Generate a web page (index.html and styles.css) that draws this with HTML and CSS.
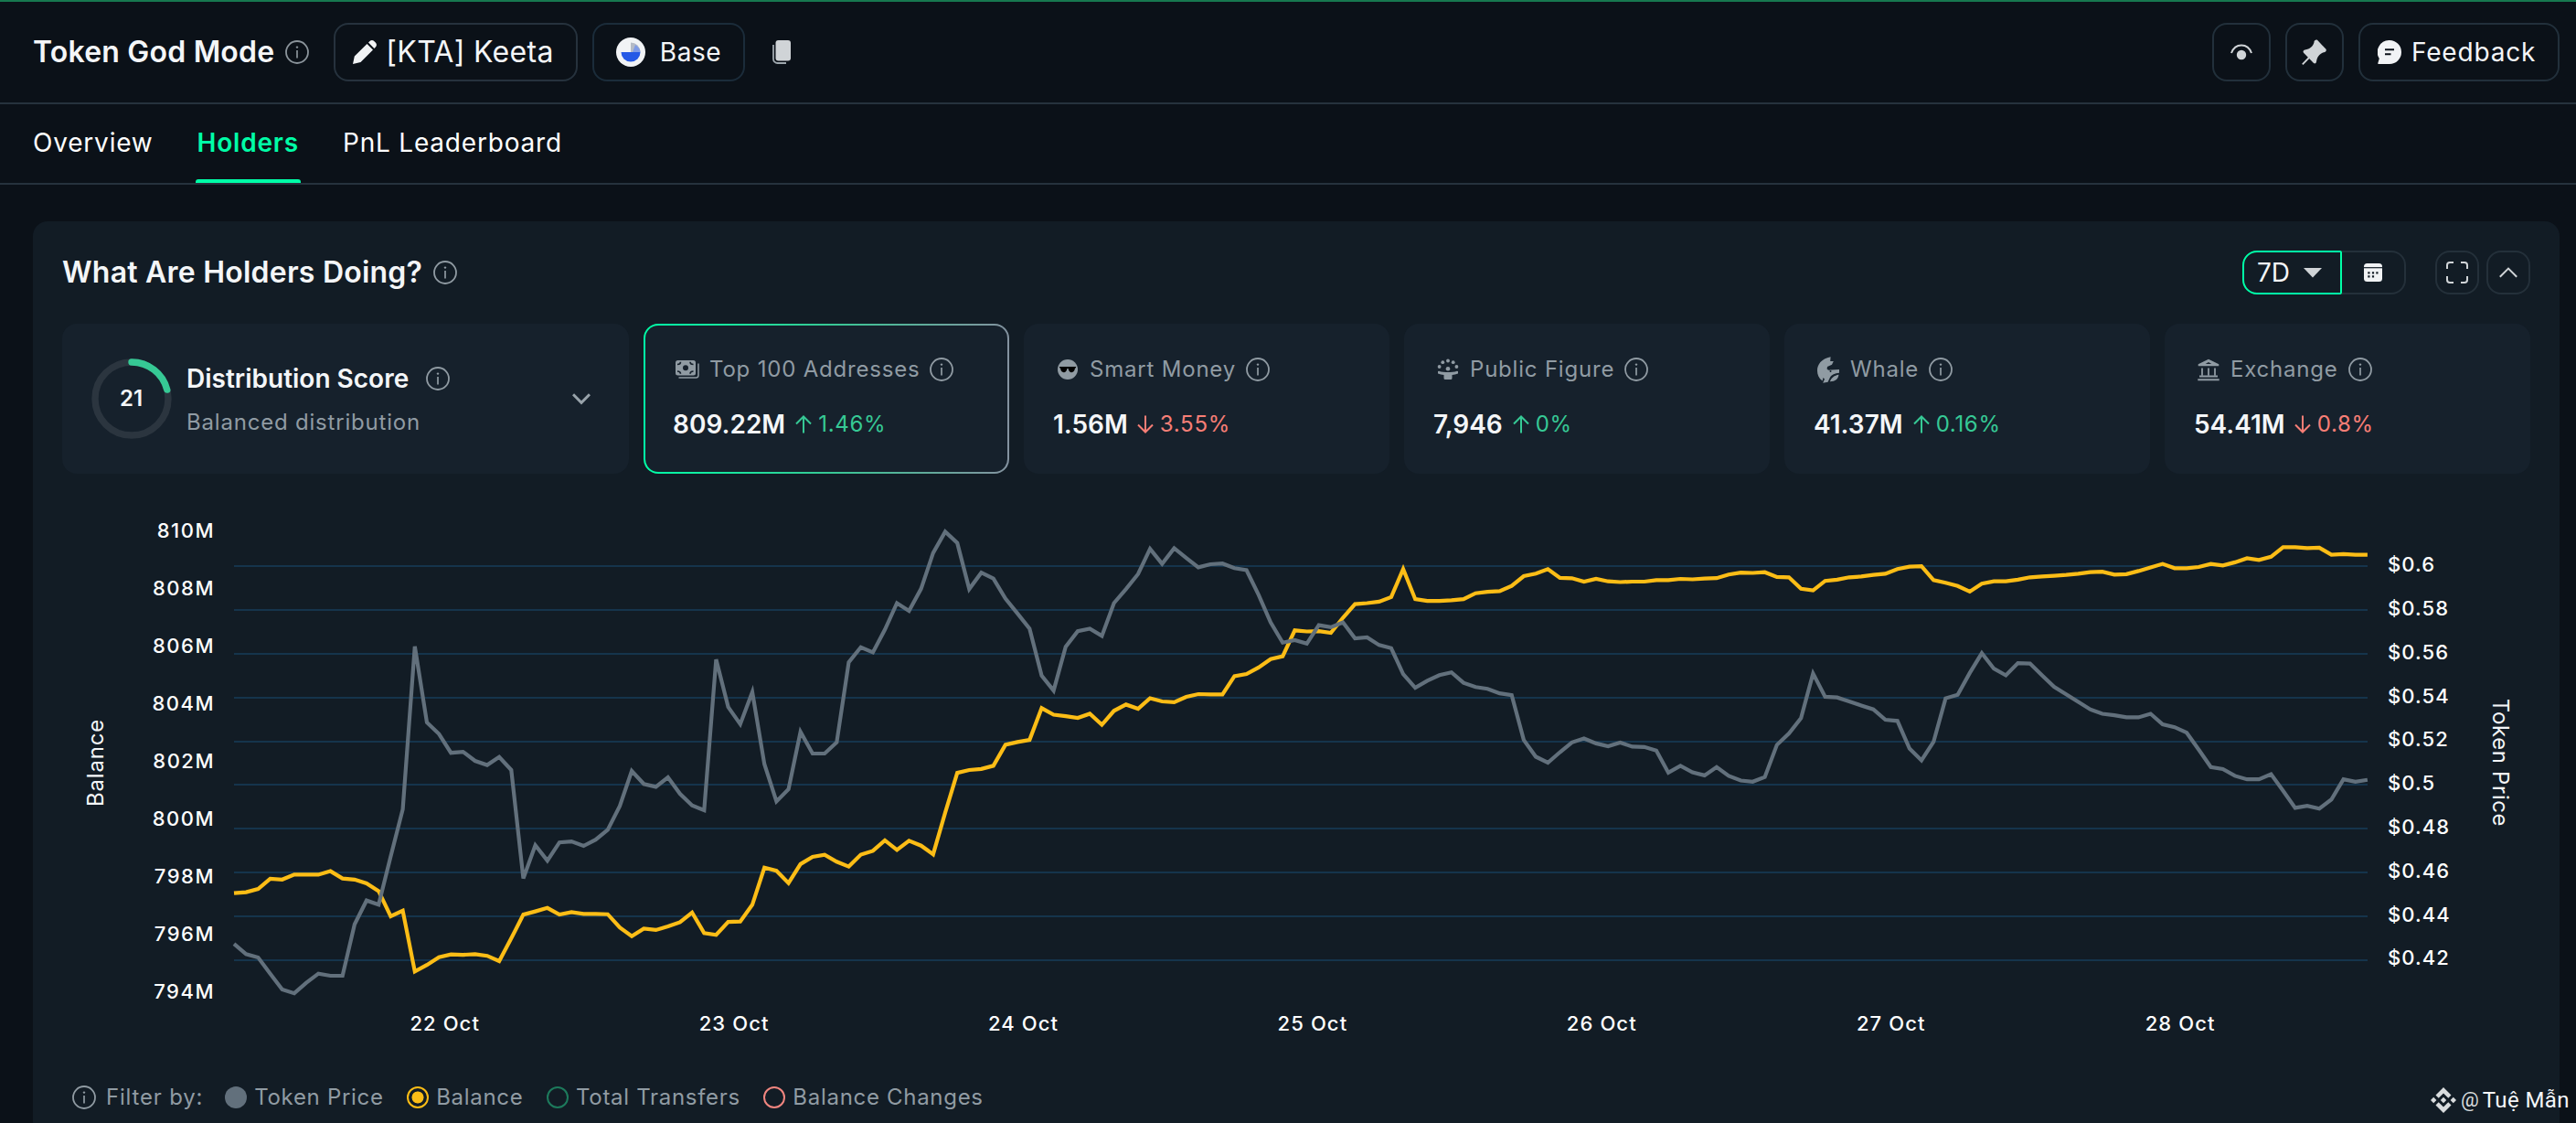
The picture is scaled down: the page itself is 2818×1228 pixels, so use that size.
FILE: index.html
```html
<!DOCTYPE html>
<html lang="en">
<head>
<meta charset="utf-8">
<title>Token God Mode</title>
<link rel="stylesheet" href="styles.css">
</head>
<body>
<svg class="defs" width="0" height="0" aria-hidden="true">
  <symbol id="info" viewBox="0 0 26 26"><circle cx="13" cy="13" r="12" fill="none" stroke="currentColor" stroke-width="1.8"/><circle cx="13" cy="7.600" r="1.200" fill="currentColor"/><path d="M13 11v8.500" stroke="currentColor" stroke-width="1.700"/></symbol>
  <symbol id="up" viewBox="0 0 18 20"><path d="M9 19.500V1.500M1 9.500l8-8 8 8" fill="none" stroke="currentColor" stroke-width="2"/></symbol>
  <symbol id="down" viewBox="0 0 18 20"><path d="M9 .5v18M1 10.500l8 8 8-8" fill="none" stroke="currentColor" stroke-width="2"/></symbol>
</svg>
<header class="topbar">
  <h1 class="page-title">Token God Mode</h1>
  <svg class="info title-info"><use href="#info"/></svg>
  <button class="pill token"><svg class="pencil" viewBox="0 0 26 26"><path d="M0 26l1.800-8.500L15.500 4l6.500 6.500L8.500 24z M17 2.600L18.500 1.100c1.500-1.500 3.500-1.300 5 .1l1.300 1.300c1.500 1.500 1.500 3.500.1 4.900L23.400 9z" fill="#f1f3f5"/></svg><span class="t">[KTA] Keeta</span></button>
  <button class="pill chain"><svg class="base" viewBox="0 0 32 32"><circle cx="16" cy="16" r="16" fill="#f1f3f5"/><path d="M16 5.500A10.500 10.500 0 0 1 26.500 16H16z" fill="#b5bbc6"/><path d="M21 8c3.500 2 5.500 5 5.500 8H18z" fill="#7f9be6"/><path d="M5.500 16h21a10.500 10.500 0 0 1-21 0z" fill="#2559e6"/></svg><span class="t">Base</span></button>
  <svg class="copy" viewBox="0 0 20 26"><rect x="3.500" width="16.500" height="22.500" rx="3" fill="#d0d4d7"/><path d="M1 5v15.500A4.500 4.500 0 0 0 5.500 25H15" fill="none" stroke="#9fa8ae" stroke-width="1.800"/></svg>
  <div class="actions">
    <button class="pill square"><svg width="24" height="18" viewBox="0 0 24 18"><path d="M1 10C3 4.500 7 1.500 12 1.500S21 4.500 23 10" fill="none" stroke="#d0d4d7" stroke-width="2"/><circle cx="12" cy="12" r="5.200" fill="#d0d4d7"/></svg></button>
    <button class="pill square"><svg width="28" height="28" viewBox="0 0 28 28"><path d="M17 .8c-1.800-.9-3.800 1-3.500 2.500C12 8 9 10.500 3.500 11.500c-1.800.6-2.500 2-1.500 3.300L13 26c1.400 1 2.700.3 3-1.500.7-5 3-8.300 7.800-10.200 2 .2 3.700-1.800 2.700-3.500z" fill="#d0d4d7"/><path d="M8 20L.8 27.300" stroke="#d0d4d7" stroke-width="1.800"/></svg></button>
    <button class="pill feedback"><svg width="26" height="26" viewBox="0 0 26 26"><path d="M13 0a13 13 0 1 1 0 26H1c-.7 0-1-.6-.6-1.200L1.800 20A13 13 0 0 1 13 0z" fill="#f1f3f5"/><path d="M8 10.300h10M8 15.300h6.500" stroke="#0b1118" stroke-width="2"/></svg><span class="t">Feedback</span></button>
  </div>
</header>
<nav class="tabs">
  <a class="tab"><span class="t">Overview</span></a>
  <a class="tab active"><span class="t">Holders</span></a>
  <a class="tab"><span class="t">PnL Leaderboard</span></a>
</nav>
<main class="panel">
  <div class="panel-head">
    <h2 class="panel-title">What Are Holders Doing?</h2>
    <svg class="info"><use href="#info"/></svg>
    <div class="tools">
      <div class="range">
        <button class="days"><span class="t">7D</span><svg width="20" height="11" viewBox="0 0 20 11"><path d="M0 0h20L10 10.500z" fill="#d0d4d7"/></svg></button>
        <button class="calendar"><svg width="20" height="20" viewBox="0 0 20 20"><rect width="20" height="20" rx="3.500" fill="#f1f3f5"/><path d="M0 4.700h20" stroke="#121c25" stroke-width="1.200"/><path d="M4.300 10.300h2.200M8.900 10.300h2.200M13.300 10.300h2.200M4.300 14.300h2.200M8.900 14.300h2.200" stroke="#121c25" stroke-width="2.200"/></svg></button>
      </div>
      <button class="tool"><svg width="24" height="24" viewBox="0 0 24 24"><path d="M1 8V4a3 3 0 0 1 3-3h4M16 1h4a3 3 0 0 1 3 3v4M23 16v4a3 3 0 0 1-3 3h-4M8 23H4a3 3 0 0 1-3-3v-4" fill="none" stroke="#d0d4d7" stroke-width="2"/></svg></button>
      <button class="tool"><svg width="20" height="12" viewBox="0 0 20 12"><path d="M.8 10.800L10 1.600l9.200 9.200" fill="none" stroke="#d0d4d7" stroke-width="2"/></svg></button>
    </div>
  </div>
  <section class="cards">
    <article class="score">
      <div class="gauge"><svg viewBox="0 0 88 88"><circle cx="44" cy="44" r="40" fill="none" stroke="#2b353f" stroke-width="7.400"/><circle cx="44" cy="44" r="40" fill="none" stroke="#36c995" stroke-width="7.400" stroke-linecap="round" pathLength="100" stroke-dasharray="21 79" transform="rotate(-90 44 44)"/></svg><span class="gauge-value">21</span></div>
      <div class="score-text">
        <div class="score-title"><span class="t">Distribution Score</span><svg class="info"><use href="#info"/></svg></div>
        <div class="score-sub"><span class="t">Balanced distribution</span></div>
      </div>
      <svg class="chev" width="20" height="13" viewBox="0 0 20 13"><path d="M1 1.200l9 9.200 9-9.200" fill="none" stroke="#98a3aa" stroke-width="3"/></svg>
    </article>
    <article class="stat selected">
      <div class="stat-name"><svg class="ico" viewBox="0 0 32 32"><rect x="3" y="6" width="22" height="16.600" rx="2.500" fill="#909ba3"/><g fill="none" stroke="#16212c" stroke-width="1.600"><path d="M5 10.500c2.500 0 3.500-1 3.500-2.800M22.500 10.500c-2.500 0-3.500-1-3.500-2.800M5 18c2.500 0 3.500 1 3.500 2.800M22.500 18c-2.500 0-3.500 1-3.500 2.800"/></g><circle cx="14" cy="14.300" r="3" fill="#16212c"/><path d="M28 9.500v12.800a2.700 2.700 0 0 1-2.700 2.700H6.500" fill="none" stroke="#909ba3" stroke-width="1.500"/></svg><span class="t">Top 100 Addresses</span><svg class="info"><use href="#info"/></svg></div>
      <div class="stat-value"><b class="t">809.22M</b><span class="delta up"><svg><use href="#up"/></svg><span class="t">1.46%</span></span></div>
    </article>
    <article class="stat">
      <div class="stat-name"><svg class="ico" viewBox="0 0 32 32"><circle cx="16" cy="16" r="11" fill="#909ba3"/><path d="M7 13h18v1.300l-1 .3c-.3 3-1.800 4.600-3.700 4.600-2 0-3.300-1.600-3.700-4.200h-1.200c-.4 2.600-1.700 4.200-3.700 4.200-1.900 0-3.400-1.600-3.700-4.600l-1-.3z" fill="#000"/></svg><span class="t">Smart Money</span><svg class="info"><use href="#info"/></svg></div>
      <div class="stat-value"><b class="t">1.56M</b><span class="delta down"><svg><use href="#down"/></svg><span class="t">3.55%</span></span></div>
    </article>
    <article class="stat">
      <div class="stat-name"><svg class="ico" viewBox="0 0 32 32"><g fill="#909ba3"><circle cx="6.600" cy="13" r="1.900"/><circle cx="10.300" cy="8.200" r="1.900"/><circle cx="16" cy="6.500" r="1.900"/><circle cx="21.700" cy="8.200" r="1.900"/><circle cx="25.400" cy="13" r="1.900"/><circle cx="16" cy="15.300" r="2.300"/><path d="M5 18l1.200-.3c3 1 6.300 1.300 9.800 1.300s6.800-.3 9.800-1.300l1.200.3v2.600c-2.300.8-4.300 1.200-6.500 1.400V25.500a1.500 1.500 0 0 1-1.500 1.500h-6a1.500 1.500 0 0 1-1.500-1.500V22c-2.200-.2-4.200-.6-6.500-1.400z"/></g></svg><span class="t">Public Figure</span><svg class="info"><use href="#info"/></svg></div>
      <div class="stat-value"><b class="t">7,946</b><span class="delta up"><svg><use href="#up"/></svg><span class="t">0%</span></span></div>
    </article>
    <article class="stat">
      <div class="stat-name"><svg class="ico" viewBox="0 0 32 32"><path d="M18.600 2.200l-.4 4.800 3.600.1-1.800 3.600-5 2.300-.4 2.500c1.200 1.500 2.800 1.200 5 1.100l8.400-.6v3.800c-4.600.6-8.300 1.800-10.200 5.300l-2.200 4.700-5.400 1 1.800-4.200-1.500-1.600-.9 3.600C5.700 25.600 4 21.500 4 17.200 4 10.800 8.300 4.200 18.600 2.200z" fill="#909ba3"/><path d="M27.500 21.700c-.8 4.800-3.700 7.200-9.700 7.600 1.800-4.500 4.700-6.800 9.700-7.600z" fill="#909ba3"/><circle cx="18.500" cy="18" r="1" fill="#16212c"/></svg><span class="t">Whale</span><svg class="info"><use href="#info"/></svg></div>
      <div class="stat-value"><b class="t">41.37M</b><span class="delta up"><svg><use href="#up"/></svg><span class="t">0.16%</span></span></div>
    </article>
    <article class="stat">
      <div class="stat-name"><svg class="ico" viewBox="0 0 32 32"><path fill-rule="evenodd" d="M16 4.700l11.300 5.600v2H4.700v-2zM16 8l-3.300 2h6.600z" fill="#909ba3"/><path d="M9 14.500v8.200M16 14.500v8.200M23 14.500v8.200" stroke="#909ba3" stroke-width="1.800"/><path d="M6 23.500h20M4.300 27.200h23.400" stroke="#909ba3" stroke-width="1.900"/></svg><span class="t">Exchange</span><svg class="info"><use href="#info"/></svg></div>
      <div class="stat-value"><b class="t">54.41M</b><span class="delta down"><svg><use href="#down"/></svg><span class="t">0.8%</span></span></div>
    </article>
  </section>
  <svg class="chart" viewBox="68 518 2700 646">
    <g id="grid"></g>
    <polyline id="balance" class="line balance-line"/>
    <polyline id="price" class="line price-line"/>
    <g id="labels" class="axis"></g>
    <text class="axis-title" text-anchor="middle" transform="translate(113 834) rotate(-90)">Balance</text>
    <text class="axis-title right" text-anchor="middle" transform="translate(2727 834) rotate(90)">Token Price</text>
  </svg>
  <footer class="legend">
    <span class="key filter"><svg class="info"><use href="#info"/></svg><span class="t">Filter by:</span></span>
    <span class="key"><i class="dot price"></i><span class="t">Token Price</span></span>
    <span class="key"><i class="dot balance"></i><span class="t">Balance</span></span>
    <span class="key"><i class="dot transfers"></i><span class="t">Total Transfers</span></span>
    <span class="key"><i class="dot changes"></i><span class="t">Balance Changes</span></span>
  </footer>
</main>
<div class="watermark"><svg width="28" height="28" viewBox="0 0 28 28"><path d="M14 0l8.500 8.500-3.200 3.200L14 6.400l-5.300 5.300-3.200-3.200zM14 28l8.500-8.500-3.200-3.200L14 21.600l-5.300-5.300-3.200 3.200zM14 10.800l3.200 3.200-3.200 3.200-3.200-3.200zM3.200 10.800L6.400 14l-3.200 3.200L0 14zM24.800 10.800L28 14l-3.200 3.200-3.200-3.200z" fill="#d9dcde"/></svg><span class="at">@</span><span class="name">Tuệ Mẫn</span></div>
<script src="chart.js"></script>
</body>
</html>
```
FILE: styles.css
```css
* { box-sizing: border-box; }
body {
  margin: 0;
  width: 2818px;
  height: 1228px;
  overflow: hidden;
  position: relative;
  background: #0b1118;
  color: #f4f6f8;
  font-family: Inter, "Liberation Sans", sans-serif;
}
h1, h2 { margin: 0; font-size: 32px; font-weight: 600; line-height: 40px; }
svg { display: block; flex: none; }
.defs { position: absolute; }
button { margin: 0; font: inherit; color: inherit; background: none; cursor: pointer; }
.t { white-space: nowrap; }
.info { width: 26px; height: 26px; color: #909ba3; }

.topbar {
  height: 114px;
  border-top: 2px solid #17784f;
  border-bottom: 2px solid #26323d;
  padding: 0 18px 0 36px;
  display: flex;
  align-items: center;
}
.page-title { letter-spacing: 0.2px; }
.title-info { margin-left: 11.500px; color: #8b949b; }
.pill {
  height: 64px;
  border: 2px solid #22303b;
  border-radius: 16px;
  padding: 0;
  display: flex;
  align-items: center;
  flex: none;
}
.token { margin-left: 27px; width: 267px; padding-left: 19px; font-size: 32px; gap: 10.500px; letter-spacing: 0.3px; border-color: #26323d; }
.token .t { padding-bottom: 1px; }
.pencil { width: 26px; height: 26px; }
.chain { margin-left: 16px; width: 167px; padding-left: 24px; font-size: 28px; gap: 16px; letter-spacing: 0.5px; border-color: #1b2c3a; }
.base { width: 32px; height: 32px; }
.copy { width: 20px; height: 26px; margin-left: 30px; }
.actions { margin-left: auto; display: flex; gap: 16px; }
.square { width: 64px; justify-content: center; }
.feedback { width: 220px; padding-left: 19px; gap: 11px; font-size: 28px; letter-spacing: 0.8px; }

.tabs {
  height: 88px;
  border-bottom: 2px solid #26323d;
  padding-left: 34px;
  display: flex;
  gap: 44px;
}
.tab { padding: 0 2px; font-size: 28px; line-height: 84px; height: 86px; letter-spacing: 0.8px; color: #fff; position: relative; }
.active { font-weight: 600; color: #00ffa7; }
.active::after { content: ""; position: absolute; left: 0; right: 0; bottom: 0; height: 4px; border-radius: 3px 3px 0 0; background: #00ffa7; }

.panel {
  margin: 40px 18px 0 36px;
  padding: 32px 32px 0;
  height: 1000px;
  border-radius: 16px;
  background: #121c25;
}
.panel-head { height: 48px; display: flex; align-items: center; }
.panel-title { letter-spacing: 0.22px; }
.panel-head > .info { margin-left: 12px; }
.tools { margin-left: auto; display: flex; }
.range { display: flex; margin-right: 32px; }
.range button { height: 48px; display: flex; align-items: center; }
.days { width: 109px; border: 2px solid #00ffa7; border-radius: 16px 2px 2px 16px; padding: 0 0 0 14px; font-size: 28px; gap: 15px; }
.calendar { width: 70px; border: 2px solid #24303a; border-left: 0; border-radius: 0 16px 16px 0; padding: 0 0 0 24px; }
.tool { width: 48px; height: 48px; border: 2px solid #24303a; border-radius: 16px; padding: 0; display: flex; align-items: center; justify-content: center; }
.tool + .tool { margin-left: 8px; }

.cards { margin-top: 32px; display: grid; grid-template-columns: 620px repeat(5, 400px); gap: 16px; }
.cards article { height: 164px; border-radius: 16px; background: #16212c; }
.score { display: flex; align-items: center; padding: 0 42px 0 32px; }
.gauge { width: 88px; height: 88px; display: grid; place-items: center; }
.gauge svg, .gauge-value { grid-area: 1 / 1; }
.gauge svg { width: 88px; height: 88px; }
.gauge-value { font-size: 24px; font-weight: 600; line-height: 30px; padding-right: 1px; }
.score-text { margin-left: 16px; padding-top: 4px; }
.score-title { display: flex; align-items: center; gap: 19px; height: 40px; font-size: 28px; font-weight: 600; }
.score-sub { margin-top: 8px; font-size: 24px; line-height: 40px; letter-spacing: 0.8px; color: #909ba3; }
.chev { margin-left: auto; }
.cards .stat { border: 2px solid transparent; padding: 32px 0 0 30px; }
.cards .selected {
  background: linear-gradient(#16212c, #16212c) padding-box, linear-gradient(90deg, #00ffa7, #36c995 50%, #8492a0) border-box;
}
.stat-name { display: flex; align-items: center; height: 32px; font-size: 24px; letter-spacing: 0.8px; color: #909ba3; }
.stat-name .t { padding-bottom: 2px; }
.ico { width: 32px; height: 32px; margin-right: 8px; }
.stat-name .info { margin-left: 11px; }
.stat-value { margin-top: 28px; display: flex; align-items: center; height: 32px; font-size: 28px; line-height: 32px; }
.stat-value b { font-weight: 600; }
.delta { display: flex; align-items: center; margin-left: 11px; gap: 7px; font-size: 24px; letter-spacing: 0.7px; }
.delta svg { width: 18px; height: 20px; }
.up { color: #36c995; }
.down { color: #f77e76; margin-left: 10px; }

.chart { width: 2700px; height: 646px; }
.chart .rule { stroke: #15344c; stroke-width: 2; }
.line { fill: none; stroke-width: 4.200; stroke-linejoin: miter; }
.balance-line { stroke: #fcbd16; }
.price-line { stroke: #62707c; }
.axis { fill: #fff; font-size: 22px; font-weight: 500; letter-spacing: 1.1px; }
.axis .left { letter-spacing: 1.500px; }
.axis-title { fill: #f4f6f8; font-size: 24px; letter-spacing: 0.8px; }
.right { letter-spacing: 0.6px; }

.legend { height: 72px; padding-left: 11px; display: flex; align-items: center; gap: 25.5px; font-size: 24px; letter-spacing: 0.7px; color: #909ba3; }
.key { display: flex; align-items: center; gap: 8px; }
.legend .t { padding-bottom: 1px; }
.filter { gap: 11px; letter-spacing: 0.8px; margin-right: -1.500px; }
.dot { width: 24px; height: 24px; border-radius: 50%; }
.price { background: #62707c; }
.balance { border: 2px solid #fcbd16; background: radial-gradient(circle, #fcbd16 6.200px, transparent 6.800px); }
.transfers { border: 2px solid #1d7a5c; }
.changes { border: 2px solid #f0857f; }

.watermark { position: absolute; left: 2659px; top: 1187px; height: 32px; display: flex; align-items: center; color: #f4f6f8; font-family: Roboto, "Noto Sans", sans-serif; font-size: 24px; line-height: 32px; white-space: nowrap; }
.at { margin-left: 5px; font-size: 22px; color: #d9dcde; }
.name { margin-left: 4px; letter-spacing: 0.4px; }
```
FILE: chart.js
```js
const X0 = 256, STEP = 13.186, TOP = 550;
const near = v => TOP + v * 0.3827;
const far = v => TOP + v * 0.4324;

const price = [
  ...[1260,1289,1299,1345,1390,1401,1371,1345,1351,1351,1204,1136,1148,1010,875,410,627,660,714,711,737,749,726,763,1073,978,1022,970,967,980,962,934,866,766,803,811,784,831,864,878,447,583,632,540,746,853,818,654,716,716,684,455,412,427,362,286,308,245,143,82,114,246,199,216,273,316,359,493,536,411,366,359,380,286,246,203,131,174,129,157,184,175,173,186,192,262,341,399,392,402,349,355,341,387,384,406,415,489,528,508,492,484,514,526,531,544,549,677,725,742,712,684,673,687,695].map(near),
  ...[606,616,617,626,682,665,681,689,668,690,702,705,693,612,583,544,431,490,492,502,512,522,548,551,621,651,604,494,485,430,380,419,436,405,406,436,465,484,503,522,533,537,542,542,533,560,567,581,624,668,673,690,699,699,686,728,771,766,773,750,699,705,700].map(far)
];
const balance = [
  ...[1115,1112,1103,1074,1076,1062,1062,1062,1052,1073,1076,1087,1109,1181,1165,1339,1320,1298,1290,1291,1289,1294,1309,1244,1176,1167,1157,1176,1169,1174,1174,1175,1213,1238,1216,1220,1210,1198,1170,1229,1234,1197,1196,1148,1042,1051,1086,1032,1011,1005,1025,1039,1005,994,964,991,965,979,1004,885,771,763,760,751,691,683,677,586,605,609,614,602,634,594,576,588,558,567,569,554,546,547,547,495,489,470,446,438,364,367,366,371,328,289,286,282,269,189,275,280,280,278,275,258,254,252,237,209,202,189,214,215,225,217,224].map(near),
  ...[200,199,199,195,195,192,193,191,190,181,176,177,175,187,188,217,221,197,194,188,186,182,179,167,161,160,195,202,210,224,204,198,198,194,188,186,184,182,179,175,174,181,180,172,163,154,165,165,162,154,158,150,140,144,136,112,112,114,113,131,129,131,131].map(far)
];
const toPoints = list => list.map((y, i) => `${(X0 + i * STEP).toFixed(1)},${y.toFixed(1)}`).join(' ');
document.getElementById('price').setAttribute('points', toPoints(price));
document.getElementById('balance').setAttribute('points', toPoints(balance));

let grid = '', labels = '';
for (let i = 0; i < 10; i++) {
  const y = Math.round(619.3 + i * 47.8);
  grid += `<path class="rule" d="M256 ${y}H2590"/>`;
  labels += `<text x="2612" y="${(625.2 + i * 47.8).toFixed(1)}">$${+(0.6 - i * 0.02).toFixed(2)}</text>`;
}
for (let i = 0; i < 9; i++) {
  labels += `<text class="left" x="235" y="${588.3 + i * 63}" text-anchor="end">${810 - i * 2}M</text>`;
}
for (let i = 0; i < 7; i++) {
  labels += `<text x="${486.7 + i * 316.4}" y="1127" text-anchor="middle">${22 + i} Oct</text>`;
}
document.getElementById('grid').innerHTML = grid;
document.getElementById('labels').innerHTML = labels;
```
